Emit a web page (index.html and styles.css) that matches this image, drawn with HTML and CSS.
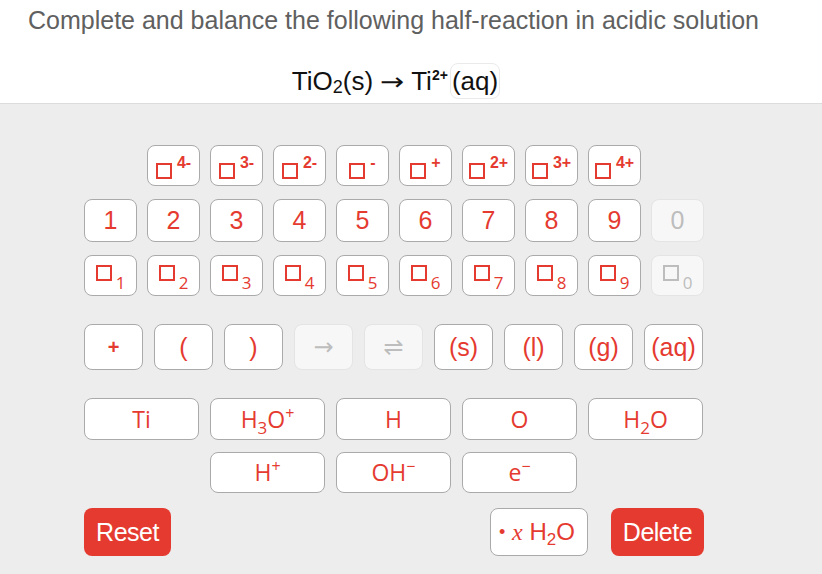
FILE: index.html
```html
<!DOCTYPE html>
<html>
<head>
    <title>Half-reaction</title>
    <link rel="stylesheet" href="styles.css">
</head>
<body>
    <div class="header">
        <h1>Complete and balance the following half-reaction in acidic solution</h1>
        <div class="equation">TiO<sub>2</sub>(s) <span class="arr">&rarr;</span> Ti<sup>2+</sup><span class="answer">(aq)</span></div>
    </div>

    <div class="panel">
        <div class="pad">
            <div class="grid10 charges">
                <span></span>
                <button class="key"><i class="sq"></i><b class="chg">4-</b></button>
                <button class="key"><i class="sq"></i><b class="chg">3-</b></button>
                <button class="key"><i class="sq"></i><b class="chg">2-</b></button>
                <button class="key"><i class="sq"></i><b class="chg">-</b></button>
                <button class="key"><i class="sq"></i><b class="chg">+</b></button>
                <button class="key"><i class="sq"></i><b class="chg">2+</b></button>
                <button class="key"><i class="sq"></i><b class="chg">3+</b></button>
                <button class="key"><i class="sq"></i><b class="chg">4+</b></button>
            </div>

            <div class="grid10 digits">
                <button class="key">1</button>
                <button class="key">2</button>
                <button class="key">3</button>
                <button class="key">4</button>
                <button class="key">5</button>
                <button class="key">6</button>
                <button class="key">7</button>
                <button class="key">8</button>
                <button class="key">9</button>
                <button class="key off">0</button>
            </div>

            <div class="grid10 subs">
                <button class="key"><i class="sq"></i><span class="idx">1</span></button>
                <button class="key"><i class="sq"></i><span class="idx">2</span></button>
                <button class="key"><i class="sq"></i><span class="idx">3</span></button>
                <button class="key"><i class="sq"></i><span class="idx">4</span></button>
                <button class="key"><i class="sq"></i><span class="idx">5</span></button>
                <button class="key"><i class="sq"></i><span class="idx">6</span></button>
                <button class="key"><i class="sq"></i><span class="idx">7</span></button>
                <button class="key"><i class="sq"></i><span class="idx">8</span></button>
                <button class="key"><i class="sq"></i><span class="idx">9</span></button>
                <button class="key off"><i class="sq"></i><span class="idx">0</span></button>
            </div>

            <div class="grid9">
                <button class="key plus">+</button>
                <button class="key">(</button>
                <button class="key">)</button>
                <button class="key off arrow">&rarr;</button>
                <button class="key off arrow">&#8652;</button>
                <button class="key">(s)</button>
                <button class="key">(l)</button>
                <button class="key">(g)</button>
                <button class="key">(aq)</button>
            </div>

            <div class="grid5 species">
                <button class="key">Ti</button>
                <button class="key">H<sub>3</sub>O<sup>+</sup></button>
                <button class="key">H</button>
                <button class="key">O</button>
                <button class="key">H<sub>2</sub>O</button>
            </div>

            <div class="grid5 species second">
                <span></span>
                <button class="key">H<sup>+</sup></button>
                <button class="key">OH<sup>&minus;</sup></button>
                <button class="key">e<sup>&minus;</sup></button>
            </div>

            <div class="actions">
                <button class="red-btn">Reset</button>
                <div class="right">
                    <button class="key hydrate"><span class="dot">&bull;</span> <em>x</em> H<sub>2</sub>O</button>
                    <button class="red-btn">Delete</button>
                </div>
            </div>
        </div>
    </div>
</body>
</html>
```

FILE: styles.css
```css
* {
    margin: 0;
    padding: 0;
    box-sizing: border-box;
}

body {
    font-family: "Liberation Sans", Arial, sans-serif;
    background: #ededed;
    width: 822px;
    height: 574px;
    overflow: hidden;
}

.header {
    background: white;
    padding-top: 6px;
    border-bottom: 1px solid #dcdcdc;
    height: 104px;
}

h1 {
    font-weight: normal;
    font-size: 25px;
    line-height: 28px;
    color: #606060;
    padding-left: 28px;
}

.equation {
    margin-top: 29px;
    text-align: center;
    font-size: 26px;
    line-height: 34px;
    color: #111;
    padding-right: 30px;
}

.arr {
    font-family: "DejaVu Sans", sans-serif;
    font-size: 24px;
    display: inline-block;
    transform: scaleX(1.2);
    margin: 0 2px;
}

.equation sub {
    font-size: 18px;
    vertical-align: -3px;
    line-height: 0;
}

.equation sup {
    font-size: 14px;
    font-weight: bold;
    vertical-align: 10px;
    line-height: 0;
}

.answer {
    display: inline-block;
    border: 1px solid #eaeaea;
    border-radius: 8px;
    padding: 0 1px;
    margin-left: 2px;
    line-height: 34px;
}

.panel {
    margin-top: 15px;
    background: #ededed;
    height: 454px;
}

.pad {
    width: 620px;
    margin-left: 84px;
    padding-top: 26px;
}

.key {
    background: white;
    border: 1px solid #aaa;
    border-radius: 8px;
    color: #e53a30;
    font-family: "Liberation Sans", Arial, sans-serif;
    font-size: 25px;
    line-height: 1;
    text-align: center;
}

.key.off {
    background: #f7f7f7;
    border-color: #e4e4e4;
    color: #bdbdbd;
}

.grid10 {
    display: grid;
    grid-template-columns: repeat(10, 53px);
    column-gap: 10px;
    height: 41px;
    margin-bottom: 13px;
}

.digits {
    height: 43px;
}

.sq {
    display: inline-block;
    width: 16px;
    height: 16px;
    border: 2px solid currentColor;
}

.charges .sq {
    vertical-align: -6px;
}

.chg {
    font-size: 16px;
    display: inline-block;
    vertical-align: 5px;
    margin-left: 5px;
}

.subs .sq {
    vertical-align: 0;
}

.idx {
    font-family: "Open Sans", "DejaVu Sans", sans-serif;
    font-size: 17px;
    display: inline-block;
    margin-left: 4px;
    vertical-align: -8px;
}

.grid9 {
    display: grid;
    grid-template-columns: repeat(9, 59px);
    column-gap: 11px;
    height: 46px;
    margin-top: 28px;
}

.plus {
    font-size: 20px;
    font-weight: bold;
}

.arrow {
    font-size: 24px;
    font-family: "DejaVu Sans", sans-serif;
}

.grid5 {
    display: grid;
    grid-template-columns: repeat(5, 115px);
    column-gap: 11px;
    height: 42px;
    margin-top: 28px;
}

.species .key {
    font-family: "Open Sans", "Noto Sans", sans-serif;
    font-size: 23px;
}

.species sub {
    font-size: 17px;
    vertical-align: -6px;
    line-height: 0;
}

.species sup {
    font-size: 16px;
    vertical-align: 9px;
    line-height: 0;
}

.grid5.second {
    height: 41px;
    margin-top: 12px;
}

.actions {
    display: flex;
    justify-content: space-between;
    margin-top: 15px;
    height: 48px;
}

.right {
    display: flex;
    gap: 23px;
}

.red-btn {
    background: #e53a30;
    color: white;
    border: none;
    border-radius: 8px;
    font-family: "Liberation Sans", Arial, sans-serif;
    font-size: 25px;
    width: 87px;
    letter-spacing: -0.5px;
}

.right .red-btn {
    width: 93px;
}

.hydrate {
    width: 98px;
    font-size: 24px;
    white-space: nowrap;
    padding-right: 4px;
}

.dot {
    font-size: 18px;
    vertical-align: 2px;
}

.hydrate em {
    font-family: "Liberation Serif", serif;
    font-size: 24px;
}

.hydrate sub {
    font-size: 17px;
    vertical-align: -5px;
    line-height: 0;
}
```
